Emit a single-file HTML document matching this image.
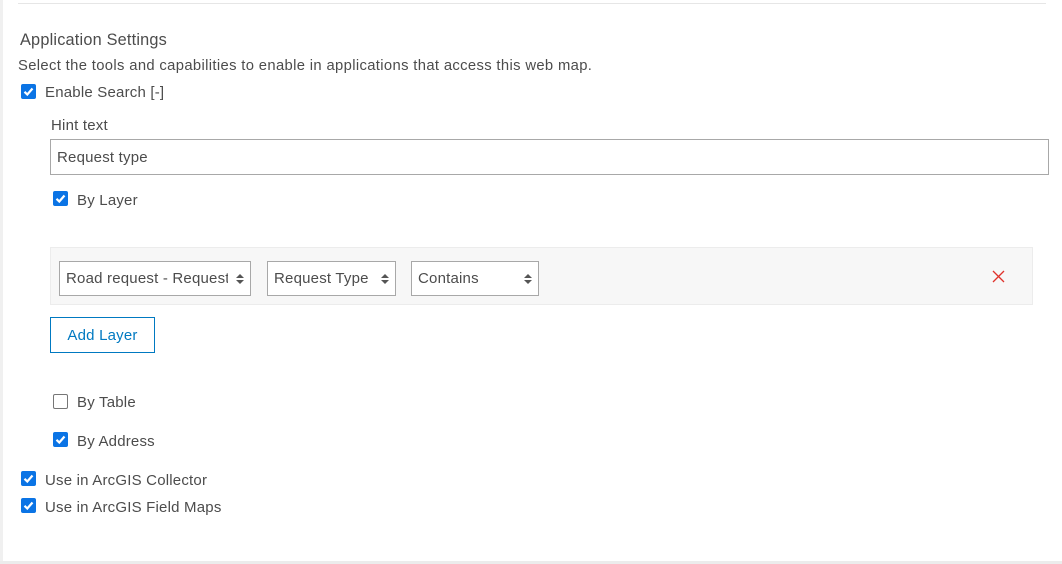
<!DOCTYPE html>
<html><head><meta charset="utf-8"><style>
*{margin:0;padding:0;box-sizing:border-box}
html,body{width:1062px;height:564px;overflow:hidden;background:#fff}
body{position:relative;font-family:"Liberation Sans",sans-serif;color:#4c4c4c;font-size:15px;letter-spacing:0.2px}
.a{position:absolute;white-space:nowrap}
.cb{position:absolute;width:15px;height:15px;border-radius:2px;background:#0b74e5}
.cb svg{position:absolute;left:0;top:0}
.cbe{position:absolute;width:15px;height:15px;border-radius:2px;border:1.5px solid #767676;background:#fff}
.sel{position:absolute;top:261px;height:35px;border:1px solid #a8a8a8;background:#fff;padding:8px 0 0 6px;font-size:15px;color:#4c4c4c;overflow:hidden}
.sel svg{position:absolute;right:5px;top:11px}
.sel .m{position:absolute;right:0;top:0;width:22px;height:33px;background:#fff}
</style></head><body>
<div class="a" style="left:0;top:0;width:3px;height:564px;background:#f0f0f0"></div>
<div class="a" style="left:18px;top:3px;width:1028px;height:1px;background:#e6e6e6"></div>
<div class="a" style="left:0;top:561px;width:1062px;height:3px;background:#ececec"></div>

<div class="a" style="left:20px;top:31px;font-size:16.3px">Application Settings</div>
<div class="a" style="left:18px;top:58px;font-size:14.8px;letter-spacing:0.35px">Select the tools and capabilities to enable in applications that access this web map.</div>

<div class="cb" style="left:21px;top:84px"><svg width="15" height="15"><path d="M3.5 7.8 L6.3 10.5 L11.5 4.5" stroke="#fff" stroke-width="2.2" fill="none"/></svg></div>
<div class="a" style="left:45px;top:84px">Enable Search [-]</div>

<div class="a" style="left:51px;top:117px">Hint text</div>
<div class="a" style="left:50px;top:139px;width:999px;height:36px;border:1px solid #a8a8a8;padding:9px 0 0 6px">Request type</div>

<div class="cb" style="left:53px;top:191px"><svg width="15" height="15"><path d="M3.5 7.8 L6.3 10.5 L11.5 4.5" stroke="#fff" stroke-width="2.2" fill="none"/></svg></div>
<div class="a" style="left:77px;top:192px">By Layer</div>

<div class="a" style="left:50px;top:247px;width:983px;height:58px;background:#f7f7f7;border:1px solid #ececec"></div>
<div class="sel" style="left:59px;width:192px">Road request - Request:<div class="m"></div>
<svg width="10" height="12"><path d="M1 5 L5 1 L9 5Z M1 7 L5 11 L9 7Z" fill="#555"/></svg></div>
<div class="sel" style="left:267px;width:129px">Request Type<svg width="10" height="12"><path d="M1 5 L5 1 L9 5Z M1 7 L5 11 L9 7Z" fill="#555"/></svg></div>
<div class="sel" style="left:411px;width:128px">Contains<svg width="10" height="12"><path d="M1 5 L5 1 L9 5Z M1 7 L5 11 L9 7Z" fill="#555"/></svg></div>
<svg class="a" style="left:992px;top:270px" width="13" height="13"><path d="M1 1 L12 12 M12 1 L1 12" stroke="#e0322b" stroke-width="1.3"/></svg>

<div class="a" style="left:50px;top:317px;width:105px;height:36px;border:1px solid #0079c1;color:#0079c1;text-align:center;padding-top:9px;font-size:15px">Add Layer</div>

<div class="cbe" style="left:53px;top:394px"></div>
<div class="a" style="left:77px;top:394px">By Table</div>
<div class="cb" style="left:53px;top:432px"><svg width="15" height="15"><path d="M3.5 7.8 L6.3 10.5 L11.5 4.5" stroke="#fff" stroke-width="2.2" fill="none"/></svg></div>
<div class="a" style="left:77px;top:433px">By Address</div>

<div class="cb" style="left:21px;top:471px"><svg width="15" height="15"><path d="M3.5 7.8 L6.3 10.5 L11.5 4.5" stroke="#fff" stroke-width="2.2" fill="none"/></svg></div>
<div class="a" style="left:45px;top:472px">Use in ArcGIS Collector</div>
<div class="cb" style="left:21px;top:498px"><svg width="15" height="15"><path d="M3.5 7.8 L6.3 10.5 L11.5 4.5" stroke="#fff" stroke-width="2.2" fill="none"/></svg></div>
<div class="a" style="left:45px;top:499px">Use in ArcGIS Field Maps</div>
</body></html>
